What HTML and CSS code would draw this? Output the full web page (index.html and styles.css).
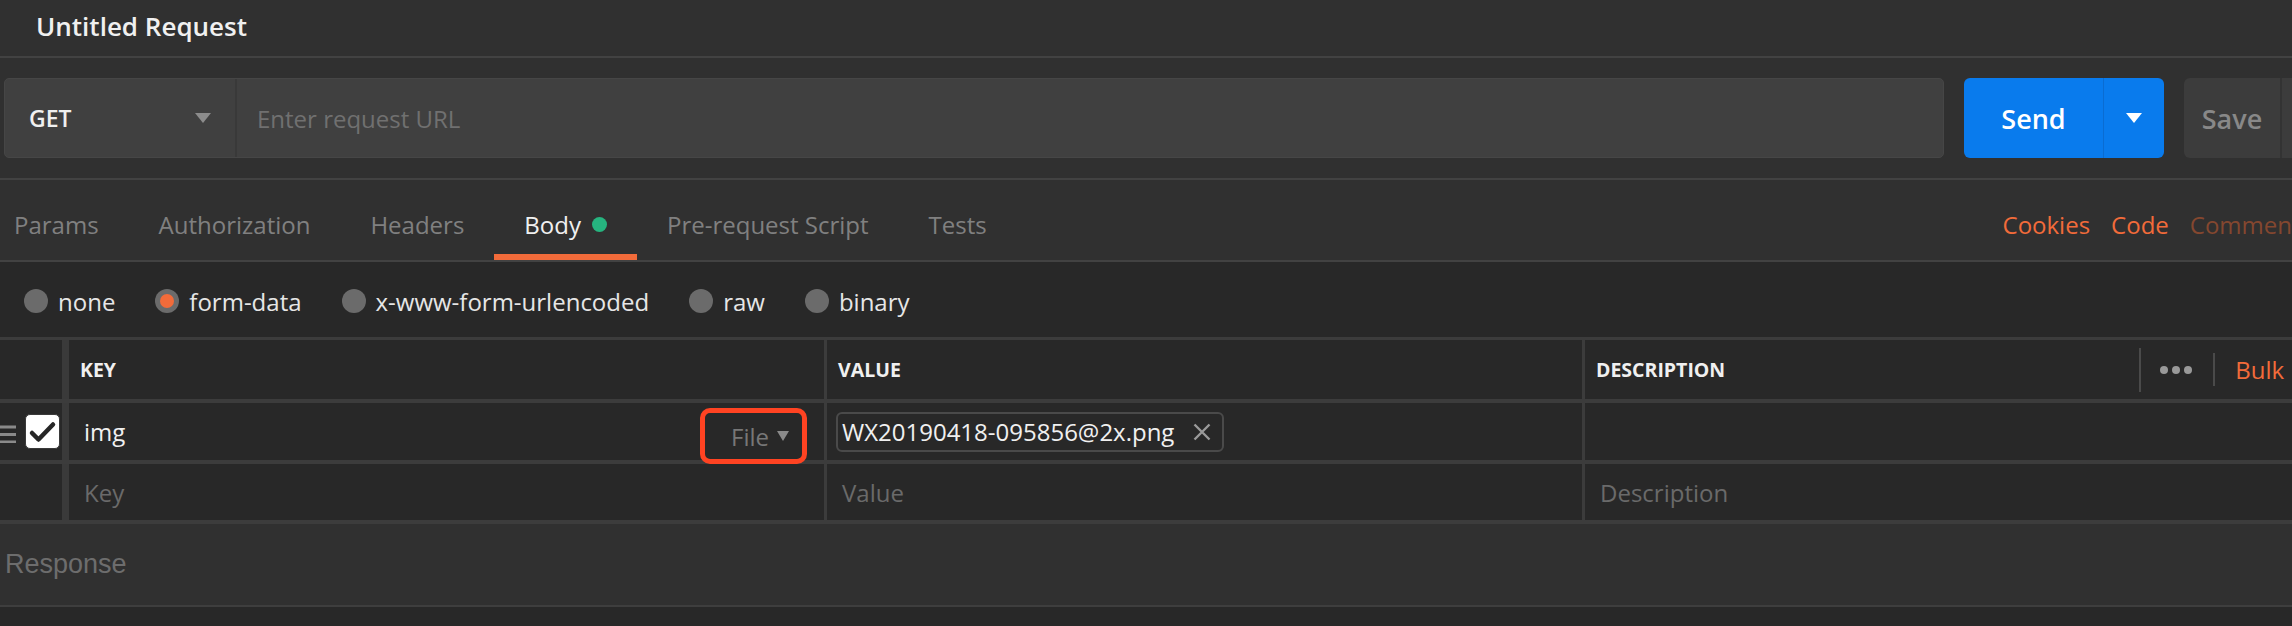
FILE: index.html
```html
<!DOCTYPE html>
<html lang="en">
<head>
    <meta charset="UTF-8">
    <meta name="viewport" content="width=device-width, initial-scale=1.0">
    <title>Untitled Request</title>
    <link rel="stylesheet" href="styles.css">
</head>
<body>
    <div class="app">
        <div class="title-bar">
            <h1 class="request-name">Untitled Request</h1>
        </div>

        <div class="url-bar">
            <div class="url-group">
                <div class="method-select">
                    <span>GET</span>
                    <span class="caret"></span>
                </div>
                <input type="text" class="url-input" placeholder="Enter request URL">
            </div>
            <div class="send-btn">
                <span class="send-label">Send</span>
                <span class="send-caret"><span class="caret caret-white"></span></span>
            </div>
            <div class="save-btn">
                <span class="save-label">Save</span>
                <span class="save-caret"><span class="caret"></span></span>
            </div>
        </div>

        <div class="tabs-bar">
            <a class="tab">Params</a>
            <a class="tab">Authorization</a>
            <a class="tab">Headers</a>
            <a class="tab active">Body <span class="tab-dot"></span></a>
            <a class="tab">Pre-request Script</a>
            <a class="tab">Tests</a>
            <div class="tab-actions">
                <a>Cookies</a>
                <a>Code</a>
                <a class="muted">Comments</a>
            </div>
        </div>

        <div class="body-types">
            <label class="radio-option"><span class="radio"></span>none</label>
            <label class="radio-option"><span class="radio checked"></span>form-data</label>
            <label class="radio-option"><span class="radio"></span>x-www-form-urlencoded</label>
            <label class="radio-option"><span class="radio"></span>raw</label>
            <label class="radio-option"><span class="radio"></span>binary</label>
        </div>

        <div class="kv-table">
            <div class="kv-row kv-head">
                <div class="kv-cell kv-handle"></div>
                <div class="kv-cell kv-key">KEY</div>
                <div class="kv-cell kv-value">VALUE</div>
                <div class="kv-cell kv-desc">
                    DESCRIPTION
                    <div class="head-actions">
                        <span class="head-sep"></span>
                        <svg class="dots" width="32" height="8" viewBox="0 0 32 8">
                            <circle cx="4" cy="4" r="4" fill="#999"/>
                            <circle cx="16" cy="4" r="4" fill="#999"/>
                            <circle cx="28" cy="4" r="4" fill="#999"/>
                        </svg>
                        <span class="head-sep short"></span>
                        <a class="bulk-edit">Bulk Edit</a>
                    </div>
                </div>
            </div>

            <div class="kv-row">
                <div class="kv-cell kv-handle">
                    <svg class="drag" width="16" height="18" viewBox="0 0 16 18">
                        <path d="M0 2h16M0 9.5h16M0 17h16" stroke="#8a8a8a" stroke-width="3"/>
                    </svg>
                    <span class="checkbox">
                        <svg width="31" height="31" viewBox="0 0 31 31">
                            <path d="M5 17l6.5 6.5L26 8.5" fill="none" stroke="#262626" stroke-width="4.5" stroke-linecap="round" stroke-linejoin="round"/>
                        </svg>
                    </span>
                </div>
                <div class="kv-cell kv-key">
                    <span class="cell-text">img</span>
                    <div class="type-select">
                        File
                        <span class="caret caret-small"></span>
                    </div>
                </div>
                <div class="kv-cell kv-value chip-cell">
                    <div class="file-chip">
                        <span class="cell-text">WX20190418-095856@2x.png</span>
                        <svg width="18" height="18" viewBox="0 0 18 18">
                            <path d="M1.5 1.5l15 15M16.5 1.5l-15 15" stroke="#9a9a9a" stroke-width="2.4"/>
                        </svg>
                    </div>
                </div>
                <div class="kv-cell kv-desc"></div>
            </div>

            <div class="kv-row kv-empty">
                <div class="kv-cell kv-handle"></div>
                <div class="kv-cell kv-key placeholder">Key</div>
                <div class="kv-cell kv-value placeholder">Value</div>
                <div class="kv-cell kv-desc placeholder">Description</div>
            </div>
        </div>

        <div class="response-bar">Response</div>
    </div>
</body>
</html>
```

FILE: styles.css
```css
:root {
    --bg: #303030;
    --bg-dark: #282828;
    --input-bg: #404040;
    --line: #424242;
    --grid-line: #3c3c3c;
    --text: #f0f0f0;
    --text-dim: #808080;
    --placeholder: #6a6a6a;
    --orange: #f26b3a;
    --blue: #097bed;
}

* {
    box-sizing: border-box;
}

body {
    margin: 0;
    background-color: var(--bg-dark);
    color: var(--text);
    font-family: 'Open Sans', 'DejaVu Sans', sans-serif;
    overflow: hidden;
}

a {
    cursor: pointer;
}

.app {
    width: 2340px;
}

.title-bar {
    height: 58px;
    display: flex;
    align-items: center;
    padding: 0 0 4px 36px;
    background-color: var(--bg);
    border-bottom: 2px solid var(--line);
}

.request-name {
    margin: 0;
    font-size: 26px;
    font-weight: 600;
    color: var(--text);
}

/* URL row */
.url-bar {
    display: flex;
    align-items: center;
    gap: 20px;
    padding: 20px 0 20px 4px;
    background-color: var(--bg);
    border-bottom: 2px solid var(--line);
}

.url-group {
    flex: 1;
    display: flex;
    height: 80px;
    background-color: var(--input-bg);
    border: 1px solid #464646;
    border-radius: 5px;
}

.method-select {
    width: 232px;
    display: flex;
    align-items: center;
    justify-content: space-between;
    padding: 0 24px 0 24px;
    border-right: 2px solid #393939;
    font-size: 23px;
    font-weight: 600;
    color: var(--text);
}

.caret {
    width: 0;
    height: 0;
    border-left: 8px solid transparent;
    border-right: 8px solid transparent;
    border-top: 10px solid #8c8c8c;
}

.caret-white {
    border-top-color: #fff;
}

.caret-small {
    border-left-width: 6.5px;
    border-right-width: 6.5px;
    border-top-color: #8a8a8a;
}

.url-input {
    flex: 1;
    background: transparent;
    border: none;
    outline: none;
    padding: 0 0 0 20px;
    font-family: 'Open Sans', sans-serif;
    font-size: 24px;
    color: var(--text);
}

.url-input::placeholder {
    color: #707070;
}

.send-btn {
    width: 200px;
    height: 80px;
    display: flex;
    background-color: var(--blue);
    border-radius: 6px;
}

.send-label {
    width: 140px;
    display: flex;
    align-items: center;
    justify-content: center;
    border-right: 1px solid #0a6cd2;
    font-size: 27px;
    font-weight: 600;
    color: #fff;
}

.send-caret,
.save-caret {
    flex: 1;
    display: flex;
    align-items: center;
    justify-content: center;
}

.save-btn {
    width: 156px;
    height: 80px;
    display: flex;
    background-color: #3c3c3c;
    border-radius: 6px;
}

.save-label {
    width: 98px;
    display: flex;
    align-items: center;
    justify-content: center;
    border-right: 2px solid #333;
    font-size: 27px;
    font-weight: 600;
    color: #888;
}

/* Tabs */
.tabs-bar {
    height: 82px;
    display: flex;
    background-color: var(--bg);
    border-bottom: 2px solid var(--line);
}

.tab {
    display: flex;
    align-items: center;
    padding: 14px 30px 0;
    border-bottom: 6px solid transparent;
    font-size: 24px;
    color: var(--text-dim);
}

.tab:first-child {
    padding-left: 14px;
}

.tab.active {
    color: var(--text);
    border-bottom-color: var(--orange);
}

.tab-dot {
    width: 15px;
    height: 15px;
    margin-left: 11px;
    border-radius: 50%;
    background-color: #26b47f;
}

.tab-actions {
    margin-left: auto;
    display: flex;
    align-items: center;
    gap: 21px;
    padding: 14px 28px 0 0;
    border-bottom: 6px solid transparent;
    font-size: 24px;
    color: var(--orange);
}

.tab-actions .muted {
    color: #84472f;
}

/* Body type radios */
.body-types {
    height: 78px;
    display: flex;
    align-items: center;
    gap: 40px;
    padding: 3px 0 0 24px;
    background-color: var(--bg-dark);
    border-bottom: 3px solid var(--grid-line);
}

.radio-option {
    display: flex;
    align-items: center;
    gap: 10px;
    font-size: 24px;
    color: #e6e6e6;
}

.radio {
    width: 24px;
    height: 24px;
    display: flex;
    align-items: center;
    justify-content: center;
    border-radius: 50%;
    background-color: #6b6b6b;
}

.radio.checked::after {
    content: '';
    width: 14px;
    height: 14px;
    border-radius: 50%;
    background-color: var(--orange);
}

/* Key / value table */
.kv-row {
    height: 61px;
    display: flex;
    border-bottom: 4px solid var(--grid-line);
}

.kv-head {
    height: 63px;
    font-size: 19.5px;
    font-weight: 700;
    color: var(--text);
}

.kv-empty {
    height: 60px;
}

.kv-cell {
    display: flex;
    align-items: center;
    padding-left: 15px;
}

.kv-head .kv-cell {
    padding-left: 11px;
}

.kv-handle {
    width: 69px;
    padding-left: 0 !important;
    border-right: 7px solid #3a3a3a;
}

.kv-key,
.kv-value {
    width: 758px;
    border-right: 3px solid var(--grid-line);
}

.kv-desc {
    flex: 1;
    padding-right: 7px;
}

.head-actions {
    margin-left: auto;
    display: flex;
    align-items: center;
}

.head-sep {
    width: 2px;
    height: 44px;
    background-color: #4a4a4a;
}

.head-sep.short {
    height: 33px;
}

.dots {
    margin: 0 21px 0 19px;
}

.bulk-edit {
    margin-left: 20px;
    font-size: 24px;
    font-weight: 400;
    color: var(--orange);
}

.drag {
    margin-top: 5px;
}

.checkbox {
    width: 35px;
    height: 35px;
    margin-left: 9px;
    display: flex;
    align-items: center;
    justify-content: center;
    background-color: #fff;
    border: 1px solid #3a3a3a;
    border-radius: 5px;
}

.cell-text {
    font-size: 24px;
    color: var(--text);
}

.type-select {
    align-self: flex-start;
    height: 56px;
    margin: 5px 17px 0 auto;
    display: flex;
    align-items: center;
    gap: 8px;
    padding: 0 13px 0 26px;
    border: 5px solid #ff4322;
    border-radius: 10px;
    font-size: 24px;
    color: #777;
}

.chip-cell {
    padding-left: 9px;
}

.file-chip {
    height: 40px;
    display: flex;
    align-items: center;
    gap: 19px;
    padding: 0 11px 0 4px;
    border: 2px solid #4a4a4a;
    border-radius: 6px;
}

.placeholder {
    font-size: 24px;
    color: var(--placeholder);
}

.response-bar {
    height: 83px;
    display: flex;
    align-items: center;
    padding-left: 5px;
    background-color: var(--bg);
    border-bottom: 2px solid #3e3e3e;
    font-family: 'Liberation Sans', Arial, sans-serif;
    font-size: 27px;
    color: #6d6d6d;
}
```
